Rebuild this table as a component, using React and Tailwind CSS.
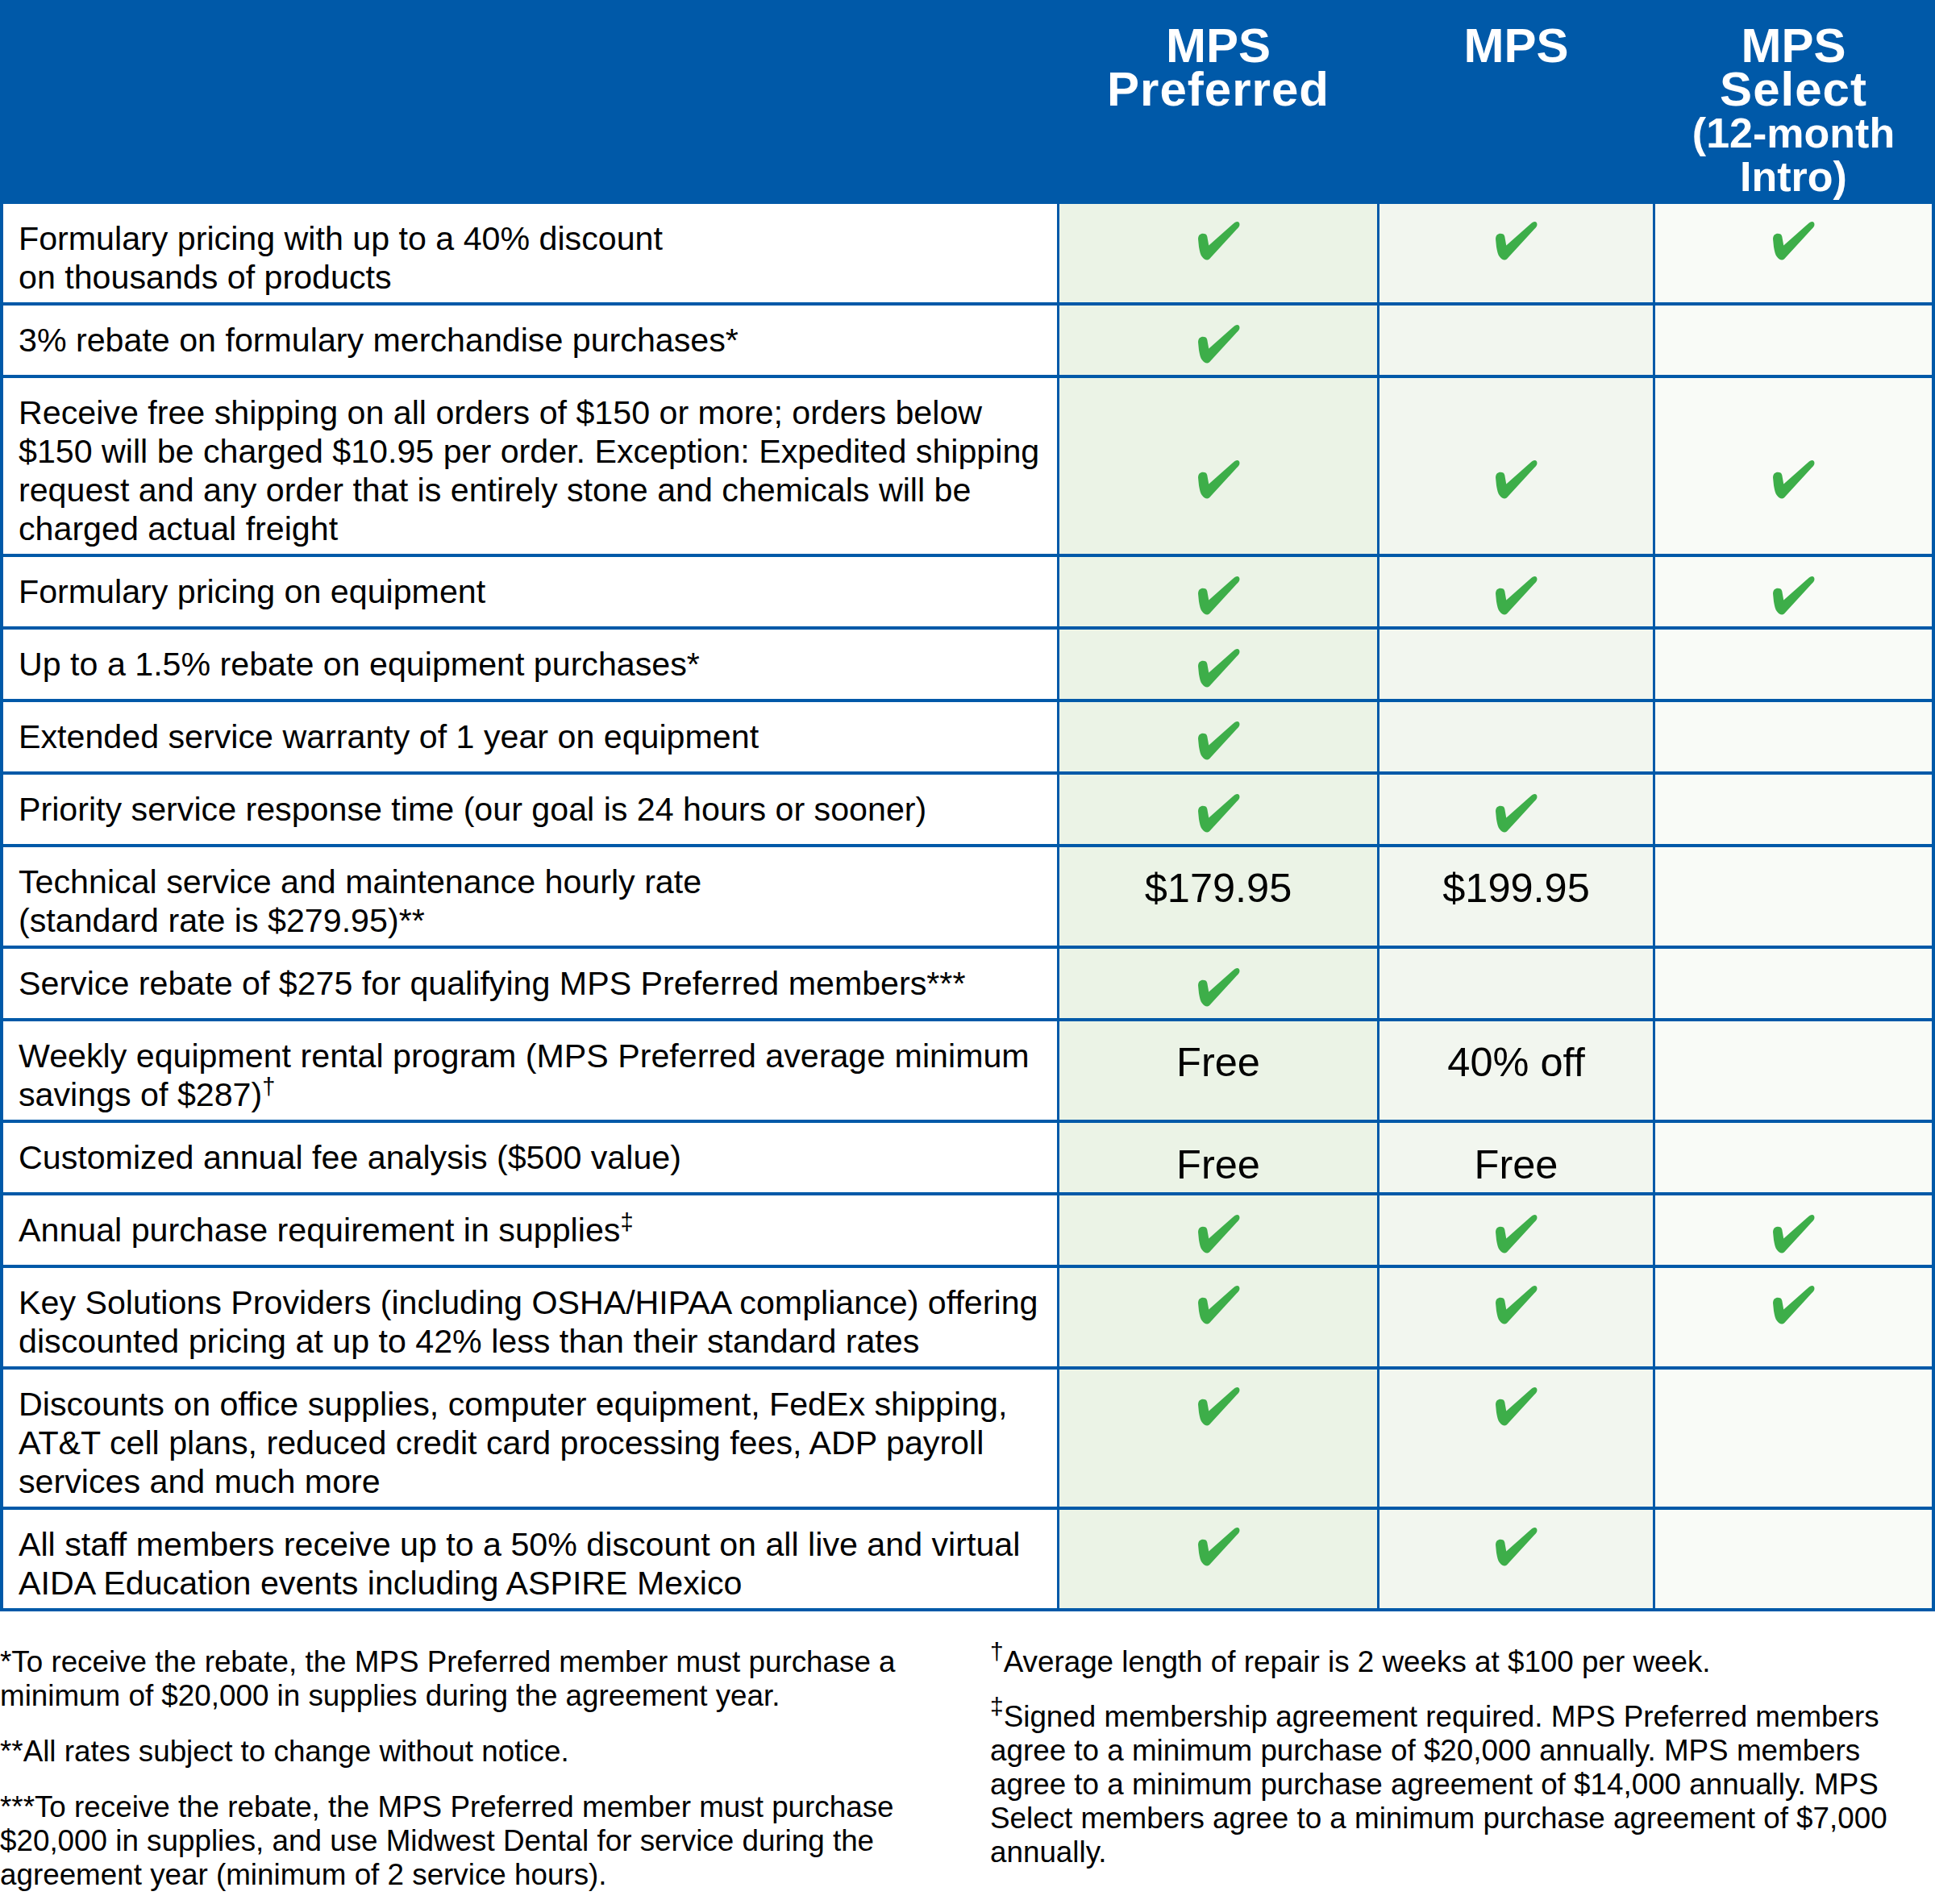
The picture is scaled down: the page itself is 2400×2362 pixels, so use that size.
import React from 'react';

const C = 'check';

const rows = [
  { label: ['Formulary pricing with up to a 40% discount', 'on thousands of products'], vals: [C, C, C] },
  { label: ['3% rebate on formulary merchandise purchases*'], vals: [C, null, null] },
  {
    label: [
      'Receive free shipping on all orders of $150 or more; orders below',
      '$150 will be charged $10.95 per order. Exception: Expedited shipping',
      'request and any order that is entirely stone and chemicals will be',
      'charged actual freight',
    ],
    vals: [C, C, C],
    mid: true,
  },
  { label: ['Formulary pricing on equipment'], vals: [C, C, C] },
  { label: ['Up to a 1.5% rebate on equipment purchases*'], vals: [C, null, null] },
  { label: ['Extended service warranty of 1 year on equipment'], vals: [C, null, null] },
  { label: ['Priority service response time (our goal is 24 hours or sooner)'], vals: [C, C, null] },
  { label: ['Technical service and maintenance hourly rate', '(standard rate is $279.95)**'], vals: ['$179.95', '$199.95', null] },
  { label: ['Service rebate of $275 for qualifying MPS Preferred members***'], vals: [C, null, null] },
  { label: ['Weekly equipment rental program (MPS Preferred average minimum', 'savings of $287)'], sup: '†', vals: ['Free', '40% off', null] },
  { label: ['Customized annual fee analysis ($500 value)'], vals: ['Free', 'Free', null] },
  { label: ['Annual purchase requirement in supplies'], sup: '‡', vals: [C, C, C] },
  { label: ['Key Solutions Providers (including OSHA/HIPAA compliance) offering', 'discounted pricing at up to 42% less than their standard rates'], vals: [C, C, C] },
  {
    label: [
      'Discounts on office supplies, computer equipment, FedEx shipping,',
      'AT&T cell plans, reduced credit card processing fees, ADP payroll',
      'services and much more',
    ],
    vals: [C, C, null],
  },
  { label: ['All staff members receive up to a 50% discount on all live and virtual', 'AIDA Education events including ASPIRE Mexico'], vals: [C, C, null] },
];

const colBg = ['bg-[#ebf3e6]', 'bg-[#f2f6ef]', 'bg-[#f9fbf7]'];

function Check() {
  return (
    <svg width="53" height="48" viewBox="0 0 54 49" className="translate-y-[5px]" aria-hidden="true">
      <path
        d="M1 22 C1 17 4 15 7 15 C10 15 12 16 12.5 19 L14.5 30 L45 3 C47 1 49 0 50.5 0 C52.5 0 53.5 1.5 53.5 3.5 C53.5 5.5 52.5 7 50 9.5 L17 45.5 C15.5 47.3 14 48.5 12.5 48.5 C10 48.5 8 47 6 44.5 C4 42 3 38 2 32 Z"
        fill="#3dae49"
      />
    </svg>
  );
}

function ValueCell({ value, bg, single, mid }) {
  const align = single ? 'items-center' : mid ? 'items-start pt-[97px]' : 'items-start pt-[17px]';
  const shift = single ? 'translate-y-[9px]' : 'translate-y-[10px]';
  return (
    <div className={`flex justify-center ${align} ${bg}`}>
      {value && (
        <div className="flex h-[48px] items-center">
          {value === C ? <Check /> : <span className={`${shift} text-[50.5px] leading-[48px]`}>{value}</span>}
        </div>
      )}
    </div>
  );
}

export default function App() {
  return (
    <div className="h-[2362px] w-[2400px] bg-white font-['Liberation_Sans',Arial,sans-serif] text-black">
      <div className="grid grid-cols-[1307px_394px_339px_343px] gap-x-[3px] gap-y-[4px] bg-[#0059a8] px-[4px] pb-[4px]">
        <div className="h-[249px]" />
        <div className="pt-[30px] text-center text-[60px] font-bold leading-[54px] text-white">
          <div>MPS</div>
          <div className="tracking-[1px]">Preferred</div>
        </div>
        <div className="pt-[30px] text-center text-[60px] font-bold leading-[54px] text-white">MPS</div>
        <div className="pt-[30px] text-center font-bold leading-[54px] text-white">
          <div className="text-[60px]">MPS</div>
          <div className="text-[60px] tracking-[1px]">Select</div>
          <div className="text-[52px]">(12-month</div>
          <div className="text-[52px]">Intro)</div>
        </div>

        {rows.map((row, i) => {
          const single = row.label.length === 1;
          return (
            <React.Fragment key={i}>
              <div
                className={`flex min-h-[86px] items-center bg-white pl-[19px] text-[41.2px] leading-[48px] ${
                  single ? 'py-[13px]' : 'pt-[19px] pb-[7px]'
                }`}
              >
                <p>
                  {row.label.map((line, j) => (
                    <React.Fragment key={j}>
                      {j > 0 && <br />}
                      {line}
                    </React.Fragment>
                  ))}
                  {row.sup && <sup className="text-[29px]">{row.sup}</sup>}
                </p>
              </div>
              {row.vals.map((v, k) => (
                <ValueCell key={k} value={v} bg={colBg[k]} single={single} mid={row.mid} />
              ))}
            </React.Fragment>
          );
        })}
      </div>

      <div className="flex pt-[42px] text-[36.8px] leading-[42px]">
        <div className="w-[1228px] space-y-[27px]">
          <p>
            *To receive the rebate, the MPS Preferred member must purchase a
            <br />
            minimum of $20,000 in supplies during the agreement year.
          </p>
          <p>**All rates subject to change without notice.</p>
          <p>
            ***To receive the rebate, the MPS Preferred member must purchase
            <br />
            $20,000 in supplies, and use Midwest Dental for service during the
            <br />
            agreement year (minimum of 2 service hours).
          </p>
        </div>
        <div className="flex-1 space-y-[26px]">
          <p>
            <sup className="text-[30px]">†</sup>Average length of repair is 2 weeks at $100 per week.
          </p>
          <p>
            <sup className="text-[30px]">‡</sup>Signed membership agreement required. MPS Preferred members
            <br />
            agree to a minimum purchase of $20,000 annually. MPS members
            <br />
            agree to a minimum purchase agreement of $14,000 annually. MPS
            <br />
            Select members agree to a minimum purchase agreement of $7,000
            <br />
            annually.
          </p>
        </div>
      </div>
    </div>
  );
}
